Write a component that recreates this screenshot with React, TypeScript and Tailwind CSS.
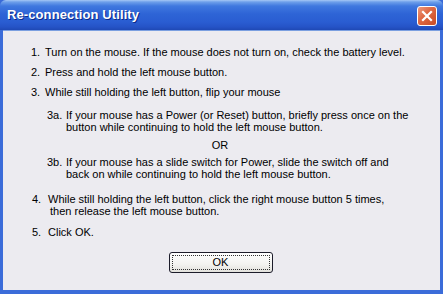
import React from "react";

const font = { fontFamily: '"Liberation Sans", Arial, sans-serif' };

export default function App() {
  return (
    <div className="w-[443px] h-[294px] flex flex-col overflow-hidden bg-[#3a6ad8]" style={font}>
      {/* Title bar */}
      <div className="h-[30px] flex items-center justify-between pl-[7px] pr-[6px] bg-[linear-gradient(to_bottom,#a6c8f5_0px,#6d9fea_2px,#3f78df_6px,#2e64d6_14px,#2a5dd2_22px,#2553c6_27px,#1f49b5_30px)] rounded-t-[6px]">
        <span className="text-white font-bold text-[13px] tracking-[0.1px] [text-shadow:1px_1px_0_#0b2a8a] mt-[-1px]">
          Re-connection Utility
        </span>
        <div className="w-[20px] h-[20px] mt-[1px] rounded-[3px] border border-white bg-[linear-gradient(135deg,#ee9a7d_0%,#df6a45_40%,#c94b24_100%)] flex items-center justify-center">
          <svg width="12" height="12" viewBox="0 0 12 12">
            <path d="M2 2 L10 10 M10 2 L2 10" stroke="white" strokeWidth="2.2" strokeLinecap="square" />
          </svg>
        </div>
      </div>
      {/* Body */}
      <div className="flex-1 flex border-l-[3px] border-r-[3px] border-b-[4px] border-[#3b6cd9]">
        <div className="flex-1 bg-[#ecebf0] border-t border-[#7b9fe0] flex flex-col text-[11px] leading-[12px] text-black pt-[15px]">
          <div className="flex pl-[28px]">
            <span className="w-[14px]">1.</span>
            <span>Turn on the mouse. If the mouse does not turn on, check the battery level.</span>
          </div>
          <div className="flex pl-[28px] mt-[8px]">
            <span className="w-[14px]">2.</span>
            <span>Press and hold the left mouse button.</span>
          </div>
          <div className="flex pl-[28px] mt-[8px]">
            <span className="w-[14px]">3.</span>
            <span>While still holding the left button, flip your mouse</span>
          </div>
          <div className="flex pl-[44px] mt-[11px]">
            <span className="w-[19px]">3a.</span>
            <span>
              If your mouse has a Power (or Reset) button, briefly press once on the
              <br />
              button while continuing to hold the left mouse button.
            </span>
          </div>
          <div className="flex justify-center pl-[2px] mt-[6px]">
            <span className="ml-[-5px]">OR</span>
          </div>
          <div className="flex pl-[44px] mt-[5px]">
            <span className="w-[19px]">3b.</span>
            <span>
              If your mouse has a slide switch for Power, slide the switch off and
              <br />
              back on while continuing to hold the left mouse button.
            </span>
          </div>
          <div className="flex pl-[29px] mt-[13px]">
            <span className="w-[16px]">4.</span>
            <span>
              While still holding the left button, click the right mouse button 5 times,
              <br />
              <span className="pl-[2px]">then release the left mouse button.</span>
            </span>
          </div>
          <div className="flex pl-[29px] mt-[9px]">
            <span className="w-[16px]">5.</span>
            <span>Click OK.</span>
          </div>
          <div className="flex justify-center mt-[14px]">
            <button
              className="ml-[-2px] w-[104px] h-[21px] rounded-[3px] border border-[#1c1c2a] bg-[linear-gradient(to_bottom,#ffffff_0%,#f3f3f0_60%,#e2e1dc_100%)] p-[2px] flex"
              style={font}
            >
              <span className="flex-1 border border-dotted border-[#333] flex items-center justify-center text-[11px] leading-none text-black">
                OK
              </span>
            </button>
          </div>
        </div>
      </div>
    </div>
  );
}
